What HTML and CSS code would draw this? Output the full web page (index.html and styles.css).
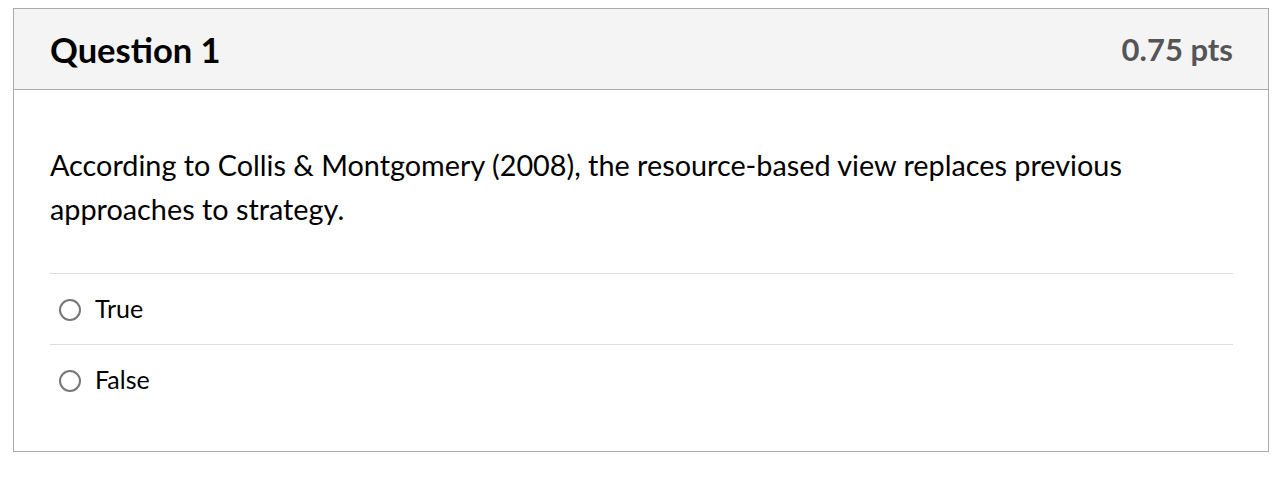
FILE: index.html
```html
<!DOCTYPE html>
<html>
<head>
<meta charset="utf-8">
<link rel="stylesheet" href="styles.css">
</head>
<body>
<div class="page">
  <div class="card">
    <div class="card-header">
      <h2 class="title">Question 1</h2>
      <span class="points">0.75 pts</span>
    </div>
    <div class="card-body">
      <p class="question">According to Collis &amp; Montgomery (2008), the resource-based view replaces previous approaches to strategy.</p>
      <div class="answers">
        <label class="answer"><span class="radio"></span><span class="answer-text">True</span></label>
        <label class="answer"><span class="radio"></span><span class="answer-text">False</span></label>
      </div>
    </div>
  </div>
</div>
</body>
</html>
```

FILE: styles.css
```css
html, body {
  margin: 0;
  padding: 0;
  background: #fff;
}
.page {
  padding: 8px 7px 0 13px;
  font-family: Lato, "Open Sans", sans-serif;
  color: #000;
}
.card {
  border: 1px solid #aaaaaa;
  width: 1256px;
  box-sizing: border-box;
}
.card-header {
  height: 81px;
  box-sizing: border-box;
  background: #f4f4f4;
  border-bottom: 1px solid #aaaaaa;
  display: flex;
  align-items: center;
  justify-content: space-between;
  padding: 0 35px 0 36px;
}
.title {
  margin: 0;
  font-size: 34.5px;
  font-weight: 700;
  color: #000;
}
.points {
  font-size: 31px;
  font-weight: 700;
  color: #555;
}
.card-body {
  padding: 53px 35px 36px 36px;
}
.question {
  margin: 0;
  font-size: 28.8px;
  line-height: 44px;
}
.answers {
  margin-top: 42px;
}
.answer {
  display: flex;
  align-items: center;
  height: 71px;
  border-top: 1px solid #dddddd;
  box-sizing: border-box;
  padding-bottom: 2px;
}
.radio {
  width: 18px;
  height: 18px;
  border: 2px solid #777;
  border-radius: 50%;
  margin-left: 9px;
  margin-right: 14px;
  margin-top: 4px;
  flex: none;
}
.answer-text {
  font-size: 25px;
}
```
